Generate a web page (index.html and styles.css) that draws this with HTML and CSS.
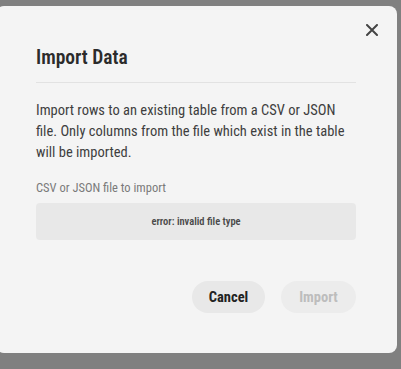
FILE: index.html
```html
<!DOCTYPE html>
<html lang="en">
<head>
    <meta charset="UTF-8">
    <title>Import Data</title>
    <link rel="stylesheet" href="styles.css">
</head>
<body>
<div class="modal">
    <button class="close" aria-label="Close">
        <svg width="12" height="12" viewBox="0 0 12 12">
            <path d="M1 1L11 11M11 1L1 11" stroke="#444" stroke-width="2" stroke-linecap="round"/>
        </svg>
    </button>
    <h2 class="title">Import Data</h2>
    <p class="desc">Import rows to an existing table from a CSV or JSON file. Only columns from the file which exist in the table will be imported.</p>
    <label class="label">CSV or JSON file to import</label>
    <div class="file-box">error: invalid file type</div>
    <div class="actions">
        <button class="btn btn-cancel">Cancel</button>
        <button class="btn btn-import" disabled>Import</button>
    </div>
</div>
</body>
</html>
```
FILE: styles.css
```css
* {
    margin: 0;
    padding: 0;
    box-sizing: border-box;
}

body {
    background: #808080;
    font-family: "Roboto Condensed", Roboto, sans-serif;
    color: #333;
}

.modal {
    position: relative;
    margin: 6px 0 0 -4px;
    width: 401px;
    height: 347px;
    padding: 0 41px 0 40px;
    background: #f4f4f4;
    border-radius: 8px;
}

/* close button sits over the top right corner */
.close {
    position: absolute;
    top: 18px;
    right: 19px;
    width: 12px;
    height: 12px;
    border: none;
    background: none;
    display: flex;
}

.title {
    padding: 40px 0 12px;
    font-size: 19.5px;
    font-weight: 600;
    line-height: 24px;
    color: #2b2b2b;
    border-bottom: 1px solid #e2e2e2;
}

.desc {
    margin-top: 17px;
    font-size: 14.5px;
    line-height: 21px;
    color: #3e3e3e;
}

.label {
    display: block;
    margin-top: 17px;
    font-size: 12.5px;
    line-height: 16px;
    color: #7a7a7a;
}

.file-box {
    margin-top: 7px;
    height: 37px;
    display: flex;
    align-items: center;
    justify-content: center;
    background: #e8e8e8;
    border-radius: 4px;
    font-size: 10.5px;
    font-weight: 600;
    color: #4a4a4a;
}

.actions {
    margin-top: 41px;
    display: flex;
    justify-content: flex-end;
    gap: 16px;
}

.btn {
    height: 32px;
    border: none;
    border-radius: 16px;
    font-family: "Roboto Condensed", Roboto, sans-serif;
    font-size: 14.5px;
    font-weight: 700;
}

.btn-cancel {
    width: 73px;
    background: #e8e8e8;
    color: #222;
}

.btn-import {
    width: 75px;
    background: #ececec;
    color: #bdbdbd;
}
```
